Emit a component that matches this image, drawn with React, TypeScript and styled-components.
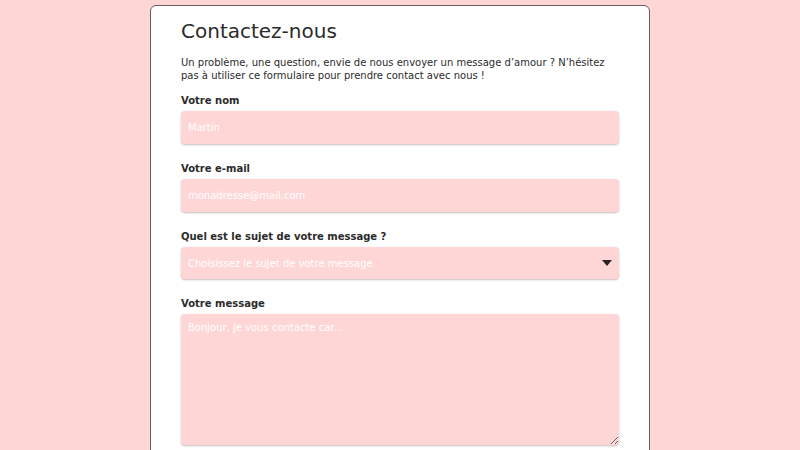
import React from "react";
import styled, { createGlobalStyle } from "styled-components";

const GlobalStyle = createGlobalStyle`
  html, body {
    margin: 0;
    padding: 0;
    background: #ffd6d6;
    font-family: "DejaVu Sans", sans-serif;
  }
`;

const Page = styled.div`
  display: flex;
  justify-content: center;
  padding-top: 5px;
  min-height: 450px;
  box-sizing: border-box;
`;

const Card = styled.form`
  width: 500px;
  box-sizing: border-box;
  background: #ffffff;
  border: 1px solid #6e5a5a;
  border-radius: 6px;
  padding: 12px 30px 20px 30px;
  display: flex;
  flex-direction: column;
`;

const Title = styled.h1`
  margin: 0;
  font-size: 20px;
  font-weight: 400;
  color: #2b2b2b;
  line-height: 26px;
`;

const Intro = styled.p`
  margin: 12px 0 0 0;
  font-size: 10px;
  line-height: 13px;
  color: #2b2b2b;
`;

const Field = styled.div`
  display: flex;
  flex-direction: column;
  margin-top: 19px;
  &:first-of-type {
    margin-top: 13px;
  }
`;

const Label = styled.label`
  font-size: 10px;
  font-weight: 700;
  color: #2b2b2b;
  line-height: 12px;
  margin-bottom: 4px;
`;

const inputBase = `
  box-sizing: border-box;
  width: 100%;
  border: none;
  outline: none;
  background: #ffd6d6;
  border-radius: 4px;
  box-shadow: 0 1px 2px rgba(120, 90, 90, 0.4);
  font-family: "DejaVu Sans", sans-serif;
  font-size: 10px;
  color: #2b2b2b;
  padding: 0 7px;
  &::placeholder {
    color: #ffffff;
    opacity: 1;
  }
`;

const TextInput = styled.input`
  ${inputBase}
  height: 33px;
`;

const SelectWrap = styled.div`
  position: relative;
`;

const Select = styled.select`
  ${inputBase}
  height: 32px;
  appearance: none;
  color: #ffffff;
`;

const Caret = styled.svg`
  position: absolute;
  right: 7px;
  top: 13px;
  pointer-events: none;
`;

const TextArea = styled.textarea`
  ${inputBase}
  height: 131px;
  padding: 8px 7px;
  resize: vertical;
`;

export default function App() {
  return (
    <>
      <GlobalStyle />
      <Page>
        <Card onSubmit={(e) => e.preventDefault()}>
          <Title>Contactez-nous</Title>
          <Intro>
            Un problème, une question, envie de nous envoyer un message d’amour ? N’hésitez
            pas à utiliser ce formulaire pour prendre contact avec nous !
          </Intro>
          <Field>
            <Label htmlFor="nom">Votre nom</Label>
            <TextInput id="nom" placeholder="Martin" />
          </Field>
          <Field>
            <Label htmlFor="email">Votre e-mail</Label>
            <TextInput id="email" type="email" placeholder="monadresse@mail.com" />
          </Field>
          <Field>
            <Label htmlFor="sujet">Quel est le sujet de votre message ?</Label>
            <SelectWrap>
              <Select id="sujet" defaultValue="">
                <option value="" disabled>
                  Choisissez le sujet de votre message
                </option>
                <option value="question">Une question</option>
                <option value="probleme">Un problème</option>
                <option value="amour">Un message d’amour</option>
              </Select>
              <Caret width="10" height="6" viewBox="0 0 10 6">
                <path d="M0 0 L10 0 L5 6 Z" fill="#2b2222" />
              </Caret>
            </SelectWrap>
          </Field>
          <Field>
            <Label htmlFor="message">Votre message</Label>
            <TextArea id="message" placeholder="Bonjour, je vous contacte car..." />
          </Field>
        </Card>
      </Page>
    </>
  );
}
